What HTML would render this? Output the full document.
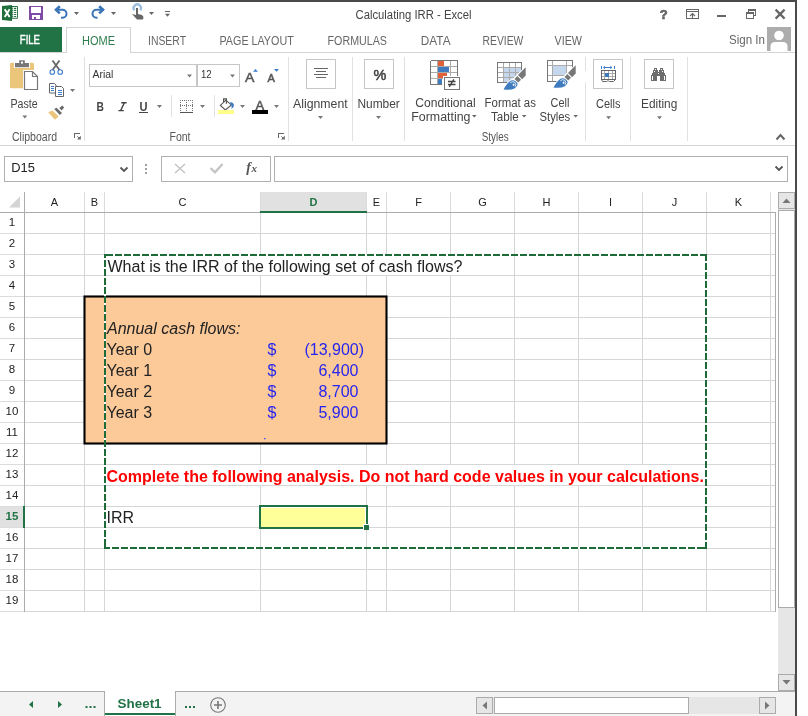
<!DOCTYPE html><html><head><meta charset="utf-8"><title>Calculating IRR - Excel</title><style>
html,body{margin:0;padding:0;background:#fff;overflow:hidden;width:808px;height:716px;}
svg{position:absolute;left:0;top:0;font-family:"Liberation Sans", sans-serif;will-change:transform;}
.c{shape-rendering:crispEdges}
</style></head><body>
<svg width="808" height="716" viewBox="0 0 808 716">
<g class="c">
<rect x="0" y="0" width="808" height="716" fill="#ffffff" />
</g>
<g>
<polygon points="2,6.1 12,5 12,21 2,19.9" fill="#1f6e3c"/>
<rect x="11.2" y="6" width="6.8" height="12.7" rx="1.2" fill="#1f6e3c"/>
<rect x="12.4" y="7" width="4.7" height="10.8" fill="#fff"/>
<rect x="14" y="7.80" width="2.3" height="1.1" rx="0.5" fill="#1f6e3c"/>
<rect x="12.2" y="7.80" width="1" height="1.1" fill="#1f6e3c"/>
<rect x="14" y="9.85" width="2.3" height="1.1" rx="0.5" fill="#1f6e3c"/>
<rect x="12.2" y="9.85" width="1" height="1.1" fill="#1f6e3c"/>
<rect x="14" y="11.90" width="2.3" height="1.1" rx="0.5" fill="#1f6e3c"/>
<rect x="12.2" y="11.90" width="1" height="1.1" fill="#1f6e3c"/>
<rect x="14" y="13.95" width="2.3" height="1.1" rx="0.5" fill="#1f6e3c"/>
<rect x="12.2" y="13.95" width="1" height="1.1" fill="#1f6e3c"/>
<rect x="14" y="16.00" width="2.3" height="1.1" rx="0.5" fill="#1f6e3c"/>
<rect x="12.2" y="16.00" width="1" height="1.1" fill="#1f6e3c"/>
<path d="M4.7 9.3 L9.6 17 M9.6 9.3 L4.7 17" stroke="#fff" stroke-width="1.9"/>
</g>
<g class="c">
<rect x="29" y="6" width="14" height="14" fill="#7e4ba8" />
<rect x="31" y="7" width="10" height="6" fill="#fff" />
<rect x="32" y="15" width="8" height="4" fill="#fff" />
<rect x="34" y="17" width="2" height="2" fill="#7e4ba8" />
</g>
<g fill="none" stroke="#3a75b8" stroke-width="2">
<path d="M56 9.8 H62.5 A4 4 0 0 1 62.5 17.8 H61"/>
<path d="M59.8 6.2 L56 9.8 L59.8 13.4" stroke-width="2.6"/>
<path d="M104 9.8 H96.5 A4 4 0 0 0 96.5 17.8 H97.5"/>
<path d="M99.2 6.2 L103 9.8 L99.2 13.4" stroke-width="2.6"/>
</g>
<polygon points="74.0,12 79.0,12 76.5,15" fill="#666"/>
<polygon points="111.0,12 116.0,12 113.5,15" fill="#666"/>
<path d="M134.3 10.3 A3.7 3.7 0 1 1 140.3 10.3" fill="none" stroke="#9bbde0" stroke-width="2.2"/>
<rect x="136" y="8" width="2" height="7" fill="#666"/>
<polygon points="132,14 136,15 136,12.5 138,12.5 138,14 142,15 143.5,17 143,19.6 137,19.6" fill="#666"/>
<polygon points="149.0,12 154.0,12 151.5,15" fill="#666"/>
<g class="c"><rect x="165" y="11" width="5" height="1" fill="#666" /></g>
<polygon points="165.0,13.8 170.0,13.8 167.5,16.8" fill="#666"/>
<text x="355.5" y="18.5" font-size="12.5" fill="#444" font-weight="normal" font-style="normal" textLength="116.0" lengthAdjust="spacingAndGlyphs">Calculating IRR - Excel</text>
<text x="659.8" y="18.6" font-size="13" font-weight="bold" fill="#666" stroke="#666" stroke-width="0.7">?</text>
<g class="c">
<rect x="686.5" y="9.5" width="12" height="9" fill="none" stroke="#666" stroke-width="1"/>
<rect x="686" y="11" width="13" height="1" fill="#666" />
<rect x="716.8" y="14.6" width="9" height="2" fill="#666" />
<rect x="748.5" y="9.5" width="7" height="6" fill="none" stroke="#666" stroke-width="1"/>
<rect x="746" y="12" width="8" height="7" fill="#fff" />
<rect x="746.5" y="12.5" width="7" height="6" fill="none" stroke="#666" stroke-width="1"/>
<rect x="746" y="12" width="8" height="2" fill="#666" />
<rect x="748" y="9" width="8" height="2" fill="#666" />
</g>
<path d="M690 16 L692.5 13.5 L695 16 M692.5 13.5 V18.5" fill="none" stroke="#666" stroke-width="1.1"/>
<path d="M775.6 9.6 L784.6 18.6 M784.6 9.6 L775.6 18.6" stroke="#666" stroke-width="2.2"/>
<rect x="778.6" y="12.6" width="3" height="3" fill="#666"/>
<g class="c">
<rect x="0" y="27" width="62" height="25" fill="#217346" />
<rect x="0" y="52" width="66" height="1" fill="#d4d4d4" />
<rect x="131" y="52" width="664" height="1" fill="#d4d4d4" />
<rect x="66" y="27" width="1" height="26" fill="#d4d4d4" />
<rect x="130" y="27" width="1" height="26" fill="#d4d4d4" />
<rect x="66" y="27" width="65" height="1" fill="#d4d4d4" />
</g>
<text x="19.8" y="44.2" font-size="12.5" fill="#fff" font-weight="normal" font-style="normal" textLength="20.2" lengthAdjust="spacingAndGlyphs" stroke="#fff" stroke-width="0.45">FILE</text>
<text x="82" y="45.1" font-size="12.5" fill="#2e7d4e" font-weight="normal" font-style="normal" textLength="33.0" lengthAdjust="spacingAndGlyphs">HOME</text>
<text x="148" y="45.1" font-size="12.5" fill="#666" font-weight="normal" font-style="normal" textLength="38.0" lengthAdjust="spacingAndGlyphs">INSERT</text>
<text x="219.5" y="45.1" font-size="12.5" fill="#666" font-weight="normal" font-style="normal" textLength="74.2" lengthAdjust="spacingAndGlyphs">PAGE LAYOUT</text>
<text x="327.6" y="45.1" font-size="12.5" fill="#666" font-weight="normal" font-style="normal" textLength="59.4" lengthAdjust="spacingAndGlyphs">FORMULAS</text>
<text x="420.8" y="45.1" font-size="12.5" fill="#666" font-weight="normal" font-style="normal" textLength="29.7" lengthAdjust="spacingAndGlyphs">DATA</text>
<text x="482.6" y="45.1" font-size="12.5" fill="#666" font-weight="normal" font-style="normal" textLength="40.7" lengthAdjust="spacingAndGlyphs">REVIEW</text>
<text x="554.5" y="45.1" font-size="12.5" fill="#666" font-weight="normal" font-style="normal" textLength="27.5" lengthAdjust="spacingAndGlyphs">VIEW</text>
<text x="729" y="43.6" font-size="12.5" fill="#666" font-weight="normal" font-style="normal" textLength="36.0" lengthAdjust="spacingAndGlyphs">Sign In</text>
<g>
<rect x="767" y="27" width="24" height="24" fill="#adadad" />
<circle cx="779" cy="35.5" r="4.8" fill="#fff"/>
<path d="M770.5 51 V46.5 Q770.5 42 775 42 H783 Q787.5 42 787.5 46.5 V51 Z" fill="#fff"/>
<circle cx="779" cy="35.5" r="5.8" fill="none" stroke="#adadad" stroke-width="1"/>
</g>
<g class="c">
<rect x="0" y="145" width="795" height="1" fill="#d4d4d4" />
<rect x="84" y="57" width="1" height="84" fill="#e1e1e1" />
<rect x="288" y="57" width="1" height="84" fill="#e1e1e1" />
<rect x="352" y="57" width="1" height="84" fill="#e1e1e1" />
<rect x="404" y="57" width="1" height="84" fill="#e1e1e1" />
<rect x="585" y="57" width="1" height="84" fill="#e1e1e1" />
<rect x="630" y="57" width="1" height="84" fill="#e1e1e1" />
<rect x="687" y="57" width="1" height="84" fill="#e1e1e1" />
</g>
<text x="12" y="141" font-size="12" fill="#555" font-weight="normal" font-style="normal" textLength="45.0" lengthAdjust="spacingAndGlyphs">Clipboard</text>
<text x="169.5" y="141" font-size="12" fill="#555" font-weight="normal" font-style="normal" textLength="21.0" lengthAdjust="spacingAndGlyphs">Font</text>
<text x="481.8" y="141" font-size="12" fill="#555" font-weight="normal" font-style="normal" textLength="26.8" lengthAdjust="spacingAndGlyphs">Styles</text>
<g class="c"><rect x="74" y="133" width="6" height="1" fill="#666" /><rect x="74" y="133" width="1" height="5" fill="#666" /></g><polygon points="77,139.6 80.8,139.6 80.8,135.8" fill="#666"/><path d="M77.3 136.3 L79.5 138.5" stroke="#666" stroke-width="1"/>
<g class="c"><rect x="278" y="133" width="6" height="1" fill="#666" /><rect x="278" y="133" width="1" height="5" fill="#666" /></g><polygon points="281,139.6 284.8,139.6 284.8,135.8" fill="#666"/><path d="M281.3 136.3 L283.5 138.5" stroke="#666" stroke-width="1"/>
<path d="M776.5 139.5 L780.5 135 L784.5 139.5" fill="none" stroke="#666" stroke-width="2"/>
<g>
<rect x="10" y="62.8" width="24" height="25.5" rx="1.5" fill="#ebc57a"/>
<rect x="14" y="62" width="16" height="6" fill="#fff" />
<path d="M15 67.2 V63 H19.2 V60.3 H24.8 V63 H29 V67.2 Z" fill="#777"/>
<rect x="21" y="61.6" width="2" height="2" fill="#fff" />
<rect x="23" y="70" width="16" height="21" fill="#fff" />
<path d="M24.5 71.5 H32.5 L37.5 76.5 V89.5 H24.5 Z M32.5 71.5 V76.5 H37.5" fill="none" stroke="#777" stroke-width="1.2"/>
</g>
<text x="10.5" y="108" font-size="12" fill="#444" font-weight="normal" font-style="normal" textLength="27.2" lengthAdjust="spacingAndGlyphs">Paste</text>
<polygon points="22.3,115.5 27.3,115.5 24.8,118.5" fill="#777"/>
<path d="M52.5 60.5 L59.5 70 M59.5 60.5 L52.5 70" stroke="#666" stroke-width="1.8"/>
<circle cx="52.3" cy="72" r="2.3" fill="none" stroke="#3d7cc9" stroke-width="1.1"/>
<circle cx="60.2" cy="72" r="2.3" fill="none" stroke="#3d7cc9" stroke-width="1.1"/>
<g fill="#fff" stroke="#666" stroke-width="1">
<path d="M49.5 83.5 H54.5 L56 85 V93 H49.5 Z"/>
<path d="M55.5 86.5 H61.5 L63.5 88.5 V96.5 H55.5 Z"/>
</g>
<g class="c" fill="#3d7cc9"><rect x="51" y="86" width="3" height="0.9" fill="#3d7cc9" /><rect x="51" y="88" width="3" height="0.9" fill="#3d7cc9" /><rect x="51" y="90" width="3" height="0.9" fill="#3d7cc9" /><rect x="57.5" y="90" width="4.5" height="0.9" fill="#3d7cc9" /><rect x="57.5" y="92" width="4.5" height="0.9" fill="#3d7cc9" /><rect x="57.5" y="94" width="4.5" height="0.9" fill="#3d7cc9" /></g>
<polygon points="70.0,89 75.0,89 72.5,92" fill="#777"/>
<polygon points="48.2,112.3 52.4,110.4 58.7,116.4 54.9,119.8" fill="#ebc57a"/>
<polygon points="54.2,109.1 56.5,107.7 62,112.9 59.8,114.9" fill="#6a6a6a"/>
<polygon points="59.3,108.1 62.3,105.6 64.2,107.6 61.5,110.5" fill="#6a6a6a"/>
<g class="c">
<rect x="89.5" y="64.5" width="107" height="22" fill="#fff" stroke="#c6c6c6"/>
<rect x="197.5" y="64.5" width="42" height="22" fill="#fff" stroke="#c6c6c6"/>
</g>
<text x="92.5" y="78" font-size="11.5" fill="#333" font-weight="normal" font-style="normal" textLength="20.9" lengthAdjust="spacingAndGlyphs">Arial</text>
<polygon points="187.0,74.5 192.0,74.5 189.5,77.5" fill="#777"/>
<text x="201" y="78" font-size="11.5" fill="#333" font-weight="normal" font-style="normal" textLength="10.7" lengthAdjust="spacingAndGlyphs">12</text>
<polygon points="230.0,74.5 235.0,74.5 232.5,77.5" fill="#777"/>
<text x="245" y="81.6" font-size="13" fill="#555" font-weight="normal" font-style="normal" textLength="9.4" lengthAdjust="spacingAndGlyphs" stroke="#555" stroke-width="0.5">A</text>
<polygon points="253,71.7 255.5,69 258,71.7" fill="#3d7cc9"/>
<text x="267.4" y="81.6" font-size="10.5" fill="#555" font-weight="normal" font-style="normal" textLength="7.4" lengthAdjust="spacingAndGlyphs" stroke="#555" stroke-width="0.5">A</text>
<polygon points="274,69 279,69 276.5,71.7" fill="#3d7cc9"/>
<text x="96.6" y="111" font-size="12.5" fill="#444" font-weight="bold" font-style="normal" textLength="7.4" lengthAdjust="spacingAndGlyphs">B</text>
<path d="M121.2 102.8 H126.6 M118.4 110.6 H123.8 M124.4 102.8 L120.6 110.6" stroke="#444" stroke-width="1.4" fill="none"/>
<text x="139.6" y="110.5" font-size="12" fill="#444" font-weight="bold" font-style="normal" textLength="8.0" lengthAdjust="spacingAndGlyphs">U</text>
<g class="c"><rect x="139" y="112" width="9" height="1.3" fill="#444" /></g>
<polygon points="157.0,105 162.0,105 159.5,108" fill="#777"/>
<g class="c"><rect x="171" y="95" width="1" height="22" fill="#e1e1e1" /><rect x="214" y="95" width="1" height="22" fill="#e1e1e1" /></g>
<g class="c">
<path d="M180.5 100 V111 M192.5 100 V111 M186.5 100 V111 M180 100.5 H193 M180 105.5 H193" fill="none" stroke="#777" stroke-width="1" stroke-dasharray="1,1"/>
<rect x="180" y="112" width="13" height="1.3" fill="#555" />
</g>
<polygon points="200.0,105 205.0,105 202.5,108" fill="#777"/>
<path d="M220.4 105.4 L225.8 100.2 L231.4 104.9 L225.4 110 Z" fill="none" stroke="#555" stroke-width="1.1"/>
<path d="M223.6 102 V98.8 H226.4 V103.8" fill="none" stroke="#555" stroke-width="1.2"/>
<path d="M230.3 102 Q234.6 102.8 233.8 106.3 Q233.2 108 231.3 108.8 Q232.3 105.5 230.3 104.3 Z" fill="#3f7cbf"/>
<g class="c"><rect x="218" y="110" width="16" height="3.5" fill="#ffff8c" /></g>
<polygon points="240.0,105 245.0,105 242.5,108" fill="#777"/>
<text x="255.6" y="109.5" font-size="12.5" fill="#555" font-weight="normal" font-style="normal" textLength="8.7" lengthAdjust="spacingAndGlyphs" stroke="#555" stroke-width="0.5">A</text>
<g class="c"><rect x="252" y="110" width="16" height="3.5" fill="#000" /></g>
<polygon points="274.0,105 279.0,105 276.5,108" fill="#777"/>
<g class="c">
<rect x="306.5" y="59.5" width="29" height="29" fill="#fff" stroke="#c6c6c6"/>
<rect x="314" y="68" width="14" height="1" fill="#666" />
<rect x="316" y="71" width="10" height="1" fill="#666" />
<rect x="314" y="74" width="14" height="1" fill="#666" />
<rect x="316" y="77" width="10" height="1" fill="#666" />
<rect x="364.5" y="59.5" width="29" height="29" fill="#fff" stroke="#c6c6c6"/>
</g>
<text x="373.5" y="79.8" font-size="14" fill="#444" font-weight="normal" font-style="normal" textLength="12.8" lengthAdjust="spacingAndGlyphs" stroke="#444" stroke-width="0.5">%</text>
<text x="293" y="107.8" font-size="12" fill="#444" font-weight="normal" font-style="normal" textLength="54.7" lengthAdjust="spacingAndGlyphs">Alignment</text>
<polygon points="318.0,116 323.0,116 320.5,119" fill="#777"/>
<text x="357.4" y="107.8" font-size="12" fill="#444" font-weight="normal" font-style="normal" textLength="42.4" lengthAdjust="spacingAndGlyphs">Number</text>
<polygon points="376.0,116 381.0,116 378.5,119" fill="#777"/>
<g class="c">
<rect x="438" y="60.5" width="6" height="6" fill="#e0623a" />
<rect x="438" y="66.5" width="11" height="6" fill="#3f7cbf" />
<rect x="438" y="72.5" width="9" height="6" fill="#e0623a" />
<rect x="438" y="78.5" width="4" height="6" fill="#3f7cbf" />
</g>
<g class="c" fill="none" stroke-width="1">
<path d="M437.5 60.5 V84.5 M450.5 60.5 V79 M430.5 66.5 H457.5 M430.5 72.5 H457.5 M430.5 78.5 H445" stroke="#aaa"/>
<path d="M430.5 60.5 H457.5 V79 M430.5 60.5 V84.5 H442" stroke="#777"/>
</g>
<g class="c"><rect x="443" y="76" width="18" height="14" fill="#fff" /><rect x="444.5" y="77.5" width="15" height="11.5" fill="#fff" stroke="#777" stroke-width="1"/></g>
<path d="M448 81.5 H455.5 M448 84.5 H455.5 M453.8 79.3 L449.2 86.8" stroke="#444" stroke-width="1.3"/>
<text x="415.3" y="106.8" font-size="12" fill="#444" font-weight="normal" font-style="normal" textLength="60.4" lengthAdjust="spacingAndGlyphs">Conditional</text>
<text x="411.3" y="121.1" font-size="12" fill="#444" font-weight="normal" font-style="normal" textLength="59.2" lengthAdjust="spacingAndGlyphs">Formatting</text>
<polygon points="472.0,115 476.6,115 474.3,117.4" fill="#666"/>
<g class="c">
<rect x="503.5" y="67.5" width="18" height="15" fill="#c5d7ec" />
</g>
<g class="c" fill="none" stroke-width="1">
<path d="M503.5 62.5 V82.5 M509.5 62.5 V82.5 M515.5 62.5 V82.5 M497.5 67.5 H521.5 M497.5 72.5 H521.5 M497.5 77.5 H521.5" stroke="#aaa"/>
<path d="M497.5 62.5 H521.5 V82.5 H497.5 Z" stroke="#777"/>
</g>
<g transform="translate(525.7,71.45) rotate(45)"><path d="M-4 -6 L16 -6 L16 32 L-3 29.8 Q-5.6 23 -5.3 18.5 Q-5 14.8 -4 13.5 Z" fill="#fff"/><polygon points="-2.9,-2.9 2.9,2.9 2.9,8 -2.9,8" fill="#777"/><rect x="-2.6" y="9.2" width="5.2" height="4" fill="#777"/><path d="M3.2 14.5 Q4.8 16.5 4.2 19.5 Q3 24 -2.9 28.5 Q-4.8 22 -4.3 18.5 Q-3.8 14.6 -0.2 14.2 Q1.8 14.1 3.2 14.5 Z" fill="#3f7cbf"/><path d="M-2.9 18.8 Q-2.6 15.6 0.2 15.4 Q3 15.5 3.3 18.3" fill="none" stroke="#fff" stroke-width="0.8"/><circle cx="0.8" cy="17.9" r="1" fill="#fff"/></g>
<text x="484.6" y="106.8" font-size="12" fill="#444" font-weight="normal" font-style="normal" textLength="51.3" lengthAdjust="spacingAndGlyphs">Format as</text>
<text x="491" y="121.1" font-size="12" fill="#444" font-weight="normal" font-style="normal" textLength="27.8" lengthAdjust="spacingAndGlyphs">Table</text>
<polygon points="521.9000000000001,115 526.5,115 524.2,117.4" fill="#666"/>
<g class="c">
<rect x="552.5" y="65.5" width="14" height="10" fill="#c5d7ec" />
</g>
<g class="c" fill="none" stroke-width="1">
<path d="M552.5 60.5 V81.5 M566.5 60.5 V81.5 M547.5 65.5 H572.5 M547.5 75.5 H572.5" stroke="#aaa"/>
<path d="M547.5 60.5 H572.5 V81.5 H547.5 Z" stroke="#777"/>
</g>
<g transform="translate(575.7,69.45) rotate(45)"><path d="M-4 -6 L16 -6 L16 32 L-3 29.8 Q-5.6 23 -5.3 18.5 Q-5 14.8 -4 13.5 Z" fill="#fff"/><polygon points="-2.9,-2.9 2.9,2.9 2.9,8 -2.9,8" fill="#777"/><rect x="-2.6" y="9.2" width="5.2" height="4" fill="#777"/><path d="M3.2 14.5 Q4.8 16.5 4.2 19.5 Q3 24 -2.9 28.5 Q-4.8 22 -4.3 18.5 Q-3.8 14.6 -0.2 14.2 Q1.8 14.1 3.2 14.5 Z" fill="#3f7cbf"/><path d="M-2.9 18.8 Q-2.6 15.6 0.2 15.4 Q3 15.5 3.3 18.3" fill="none" stroke="#fff" stroke-width="0.8"/><circle cx="0.8" cy="17.9" r="1" fill="#fff"/></g>
<text x="550.5" y="106.8" font-size="12" fill="#444" font-weight="normal" font-style="normal" textLength="18.8" lengthAdjust="spacingAndGlyphs">Cell</text>
<text x="539.5" y="121.1" font-size="12" fill="#444" font-weight="normal" font-style="normal" textLength="30.7" lengthAdjust="spacingAndGlyphs">Styles</text>
<polygon points="573.4000000000001,115 578.0,115 575.7,117.4" fill="#666"/>
<g class="c">
<rect x="593.5" y="59.5" width="29" height="29" fill="#fff" stroke="#c6c6c6"/>
<rect x="644.5" y="59.5" width="29" height="29" fill="#fff" stroke="#c6c6c6"/>
</g>
<g class="c" fill="none" stroke-width="1">
<path d="M604.5 70.5 V79.5 M608.5 70.5 V79.5 M612.5 70.5 V79.5 M601.5 73.5 H615.5 M601.5 76.5 H615.5" stroke="#aaa"/>
<rect x="604.5" y="73" width="4.5" height="4" fill="#3f7cbf" />
<path d="M601.5 70.5 H615.5 V79.5 H601.5 Z" stroke="#666"/>
</g>
<path d="M602 79.5 V80.5 Q602 81.5 603 81.5 H606.5 Q607.5 81.5 608 80.5 Q608.5 81.5 609.5 81.5 H613.5 L615 80" fill="none" stroke="#666" stroke-width="1"/>
<g class="c"><rect x="601" y="66" width="1" height="3" fill="#3d7cc9" /><rect x="613.5" y="66" width="1" height="3" fill="#3d7cc9" /><rect x="604" y="67" width="7" height="1" fill="#3d7cc9" /></g>
<polygon points="603,67.5 605,65.8 605,69.2" fill="#3d7cc9"/><polygon points="612.3,67.5 610.3,65.8 610.3,69.2" fill="#3d7cc9"/>
<g class="c">
<rect x="654" y="68" width="3" height="3" fill="#6d6d6d" />
<rect x="660" y="68" width="3" height="3" fill="#6d6d6d" />
<rect x="653" y="70" width="5" height="3" fill="#6d6d6d" />
<rect x="659" y="70" width="5" height="3" fill="#6d6d6d" />
<rect x="652" y="73" width="5" height="2" fill="#6d6d6d" />
<rect x="660" y="73" width="5" height="2" fill="#6d6d6d" />
<rect x="651" y="75" width="6" height="6" fill="#6d6d6d" />
<rect x="660" y="75" width="6" height="6" fill="#6d6d6d" />
<rect x="657" y="72" width="3" height="4" fill="#6d6d6d" />
<rect x="655" y="69" width="1" height="1" fill="#fff" />
<rect x="661" y="69" width="1" height="1" fill="#fff" />
<rect x="654" y="71" width="1" height="1" fill="#fff" />
<rect x="662" y="71" width="1" height="1" fill="#fff" />
<rect x="652" y="76" width="1" height="4" fill="#fff" />
<rect x="664" y="76" width="1" height="4" fill="#fff" />
<rect x="658" y="73" width="1" height="1" fill="#fff" />
</g>
<text x="596" y="107.8" font-size="12" fill="#444" font-weight="normal" font-style="normal" textLength="24.4" lengthAdjust="spacingAndGlyphs">Cells</text>
<polygon points="606.1,116.3 611.1,116.3 608.6,119.3" fill="#777"/>
<text x="641" y="107.8" font-size="12" fill="#444" font-weight="normal" font-style="normal" textLength="36.3" lengthAdjust="spacingAndGlyphs">Editing</text>
<polygon points="657.0,116.3 662.0,116.3 659.5,119.3" fill="#777"/>
<g class="c">
<rect x="4.5" y="156.5" width="128" height="25" fill="#fff" stroke="#b0b0b0"/>
<rect x="161.5" y="156.5" width="109" height="25" fill="#fff" stroke="#b0b0b0"/>
<rect x="274.5" y="156.5" width="513" height="25" fill="#fff" stroke="#b0b0b0"/>
<rect x="145" y="164" width="2" height="2" fill="#a0a0a0" />
<rect x="145" y="168" width="2" height="2" fill="#a0a0a0" />
<rect x="145" y="172" width="2" height="2" fill="#a0a0a0" />
</g>
<text x="11.3" y="172.3" font-size="12.5" fill="#222" font-weight="normal" font-style="normal" textLength="23.7" lengthAdjust="spacingAndGlyphs">D15</text>
<path d="M120.5 167.5 L124 171 L127.5 167.5" fill="none" stroke="#555" stroke-width="1.8"/>
<path d="M775.5 166.5 L779 170 L782.5 166.5" fill="none" stroke="#555" stroke-width="1.8"/>
<path d="M175 164 L185 173 M185 164 L175 173" stroke="#c4c4c4" stroke-width="1.4"/>
<path d="M210.5 168 L215 172.3 L222.5 164" fill="none" stroke="#c4c4c4" stroke-width="2.3"/>
<text x="246.3" y="171.8" font-family="Liberation Serif" font-size="14" font-style="italic" font-weight="bold" fill="#555">f</text>
<text x="251.6" y="171.8" font-family="Liberation Serif" font-size="11" font-style="italic" font-weight="bold" fill="#555">x</text>
<g class="c">
<rect x="260" y="192" width="106" height="20" fill="#e1e1e1" />
<rect x="0" y="506" width="23" height="21" fill="#e1e1e1" />
<rect x="84" y="192" width="1" height="20" fill="#dcdcdc" />
<rect x="104" y="192" width="1" height="20" fill="#dcdcdc" />
<rect x="260" y="192" width="1" height="20" fill="#dcdcdc" />
<rect x="366" y="192" width="1" height="20" fill="#dcdcdc" />
<rect x="386" y="192" width="1" height="20" fill="#dcdcdc" />
<rect x="450" y="192" width="1" height="20" fill="#dcdcdc" />
<rect x="514" y="192" width="1" height="20" fill="#dcdcdc" />
<rect x="578" y="192" width="1" height="20" fill="#dcdcdc" />
<rect x="642" y="192" width="1" height="20" fill="#dcdcdc" />
<rect x="706" y="192" width="1" height="20" fill="#dcdcdc" />
<rect x="770" y="192" width="1" height="20" fill="#dcdcdc" />
<rect x="0" y="212" width="776" height="1" fill="#ababab" />
<rect x="24" y="192" width="1" height="420" fill="#ababab" />
</g>
<polygon points="20,196.5 20,207.5 9,207.5" fill="#d4d4d4"/>
<g class="c">
<rect x="0" y="233" width="24" height="1" fill="#dcdcdc" />
<rect x="25" y="233" width="750" height="1" fill="#d6d6d6" />
<rect x="0" y="254" width="24" height="1" fill="#dcdcdc" />
<rect x="25" y="254" width="750" height="1" fill="#d6d6d6" />
<rect x="0" y="275" width="24" height="1" fill="#dcdcdc" />
<rect x="25" y="275" width="750" height="1" fill="#d6d6d6" />
<rect x="0" y="296" width="24" height="1" fill="#dcdcdc" />
<rect x="25" y="296" width="750" height="1" fill="#d6d6d6" />
<rect x="0" y="317" width="24" height="1" fill="#dcdcdc" />
<rect x="25" y="317" width="750" height="1" fill="#d6d6d6" />
<rect x="0" y="338" width="24" height="1" fill="#dcdcdc" />
<rect x="25" y="338" width="750" height="1" fill="#d6d6d6" />
<rect x="0" y="359" width="24" height="1" fill="#dcdcdc" />
<rect x="25" y="359" width="750" height="1" fill="#d6d6d6" />
<rect x="0" y="380" width="24" height="1" fill="#dcdcdc" />
<rect x="25" y="380" width="750" height="1" fill="#d6d6d6" />
<rect x="0" y="401" width="24" height="1" fill="#dcdcdc" />
<rect x="25" y="401" width="750" height="1" fill="#d6d6d6" />
<rect x="0" y="422" width="24" height="1" fill="#dcdcdc" />
<rect x="25" y="422" width="750" height="1" fill="#d6d6d6" />
<rect x="0" y="443" width="24" height="1" fill="#dcdcdc" />
<rect x="25" y="443" width="750" height="1" fill="#d6d6d6" />
<rect x="0" y="464" width="24" height="1" fill="#dcdcdc" />
<rect x="25" y="464" width="750" height="1" fill="#d6d6d6" />
<rect x="0" y="485" width="24" height="1" fill="#dcdcdc" />
<rect x="25" y="485" width="750" height="1" fill="#d6d6d6" />
<rect x="0" y="506" width="24" height="1" fill="#dcdcdc" />
<rect x="25" y="506" width="750" height="1" fill="#d6d6d6" />
<rect x="0" y="527" width="24" height="1" fill="#dcdcdc" />
<rect x="25" y="527" width="750" height="1" fill="#d6d6d6" />
<rect x="0" y="548" width="24" height="1" fill="#dcdcdc" />
<rect x="25" y="548" width="750" height="1" fill="#d6d6d6" />
<rect x="0" y="569" width="24" height="1" fill="#dcdcdc" />
<rect x="25" y="569" width="750" height="1" fill="#d6d6d6" />
<rect x="0" y="590" width="24" height="1" fill="#dcdcdc" />
<rect x="25" y="590" width="750" height="1" fill="#d6d6d6" />
<rect x="0" y="611" width="24" height="1" fill="#dcdcdc" />
<rect x="25" y="611" width="750" height="1" fill="#d6d6d6" />
<rect x="84" y="213" width="1" height="399" fill="#d6d6d6" />
<rect x="104" y="213" width="1" height="399" fill="#d6d6d6" />
<rect x="260" y="213" width="1" height="42" fill="#d6d6d6" />
<rect x="260" y="275" width="1" height="190" fill="#d6d6d6" />
<rect x="260" y="485" width="1" height="127" fill="#d6d6d6" />
<rect x="366" y="213" width="1" height="42" fill="#d6d6d6" />
<rect x="366" y="275" width="1" height="190" fill="#d6d6d6" />
<rect x="366" y="485" width="1" height="127" fill="#d6d6d6" />
<rect x="386" y="213" width="1" height="42" fill="#d6d6d6" />
<rect x="386" y="275" width="1" height="190" fill="#d6d6d6" />
<rect x="386" y="485" width="1" height="127" fill="#d6d6d6" />
<rect x="450" y="213" width="1" height="42" fill="#d6d6d6" />
<rect x="450" y="275" width="1" height="190" fill="#d6d6d6" />
<rect x="450" y="485" width="1" height="127" fill="#d6d6d6" />
<rect x="514" y="213" width="1" height="252" fill="#d6d6d6" />
<rect x="514" y="485" width="1" height="127" fill="#d6d6d6" />
<rect x="578" y="213" width="1" height="252" fill="#d6d6d6" />
<rect x="578" y="485" width="1" height="127" fill="#d6d6d6" />
<rect x="642" y="213" width="1" height="252" fill="#d6d6d6" />
<rect x="642" y="485" width="1" height="127" fill="#d6d6d6" />
<rect x="706" y="213" width="1" height="399" fill="#d6d6d6" />
<rect x="770" y="213" width="1" height="399" fill="#d6d6d6" />
<rect x="775" y="212" width="1" height="400" fill="#ababab" />
<rect x="260" y="211" width="107" height="2" fill="#217346" />
<rect x="23" y="506" width="2" height="22" fill="#217346" />
</g>
<text x="54.5" y="205.6" font-size="11" text-anchor="middle" fill="#222" font-weight="normal">A</text>
<text x="94.5" y="205.6" font-size="11" text-anchor="middle" fill="#222" font-weight="normal">B</text>
<text x="182.5" y="205.6" font-size="11" text-anchor="middle" fill="#222" font-weight="normal">C</text>
<text x="313.5" y="205.6" font-size="11" text-anchor="middle" fill="#217346" font-weight="bold">D</text>
<text x="376.5" y="205.6" font-size="11" text-anchor="middle" fill="#222" font-weight="normal">E</text>
<text x="418.5" y="205.6" font-size="11" text-anchor="middle" fill="#222" font-weight="normal">F</text>
<text x="482.5" y="205.6" font-size="11" text-anchor="middle" fill="#222" font-weight="normal">G</text>
<text x="546.5" y="205.6" font-size="11" text-anchor="middle" fill="#222" font-weight="normal">H</text>
<text x="610.5" y="205.6" font-size="11" text-anchor="middle" fill="#222" font-weight="normal">I</text>
<text x="674.5" y="205.6" font-size="11" text-anchor="middle" fill="#222" font-weight="normal">J</text>
<text x="738.5" y="205.6" font-size="11" text-anchor="middle" fill="#222" font-weight="normal">K</text>
<text x="12" y="226.3" font-size="11.5" text-anchor="middle" fill="#222" font-weight="normal">1</text>
<text x="12" y="247.3" font-size="11.5" text-anchor="middle" fill="#222" font-weight="normal">2</text>
<text x="12" y="268.3" font-size="11.5" text-anchor="middle" fill="#222" font-weight="normal">3</text>
<text x="12" y="289.3" font-size="11.5" text-anchor="middle" fill="#222" font-weight="normal">4</text>
<text x="12" y="310.3" font-size="11.5" text-anchor="middle" fill="#222" font-weight="normal">5</text>
<text x="12" y="331.3" font-size="11.5" text-anchor="middle" fill="#222" font-weight="normal">6</text>
<text x="12" y="352.3" font-size="11.5" text-anchor="middle" fill="#222" font-weight="normal">7</text>
<text x="12" y="373.3" font-size="11.5" text-anchor="middle" fill="#222" font-weight="normal">8</text>
<text x="12" y="394.3" font-size="11.5" text-anchor="middle" fill="#222" font-weight="normal">9</text>
<text x="12" y="415.3" font-size="11.5" text-anchor="middle" fill="#222" font-weight="normal">10</text>
<text x="12" y="436.3" font-size="11.5" text-anchor="middle" fill="#222" font-weight="normal">11</text>
<text x="12" y="457.3" font-size="11.5" text-anchor="middle" fill="#222" font-weight="normal">12</text>
<text x="12" y="478.3" font-size="11.5" text-anchor="middle" fill="#222" font-weight="normal">13</text>
<text x="12" y="499.3" font-size="11.5" text-anchor="middle" fill="#222" font-weight="normal">14</text>
<text x="12" y="520.3" font-size="11.5" text-anchor="middle" fill="#217346" font-weight="bold">15</text>
<text x="12" y="541.3" font-size="11.5" text-anchor="middle" fill="#222" font-weight="normal">16</text>
<text x="12" y="562.3" font-size="11.5" text-anchor="middle" fill="#222" font-weight="normal">17</text>
<text x="12" y="583.3" font-size="11.5" text-anchor="middle" fill="#222" font-weight="normal">18</text>
<text x="12" y="604.3" font-size="11.5" text-anchor="middle" fill="#222" font-weight="normal">19</text>
<g class="c">
<rect x="84" y="296" width="302" height="147" fill="#fcc999" />
</g>
<rect x="84.5" y="296.5" width="302" height="147" fill="none" stroke="#000" stroke-width="2.1"/>
<g class="c">
<rect x="260" y="506" width="106" height="21" fill="#ffff99" />
<rect x="259" y="505" width="109" height="2" fill="#217346" />
<rect x="259" y="505" width="2" height="24" fill="#217346" />
<rect x="366" y="505" width="2" height="19" fill="#217346" />
<rect x="259" y="527" width="104" height="2" fill="#217346" />
<rect x="261" y="507" width="104" height="1" fill="#fff" />
<rect x="365" y="507" width="1" height="17" fill="#fff" />
<rect x="363" y="524" width="6" height="1" fill="#fff" />
<rect x="363" y="524" width="1" height="6" fill="#fff" />
<rect x="364" y="525" width="5" height="5" fill="#217346" />
</g>
<text x="107.5" y="271.5" font-size="16" fill="#222" font-weight="normal" font-style="normal" text-anchor="start">What is the IRR of the following set of cash flows?</text>
<text x="107" y="333.5" font-size="16" fill="#222" font-weight="normal" font-style="italic" text-anchor="start">Annual cash flows:</text>
<text x="106.5" y="354.5" font-size="16" fill="#222" font-weight="normal" font-style="normal" text-anchor="start">Year 0</text>
<text x="267.5" y="354.5" font-size="16" fill="#2525ee" font-weight="normal" font-style="normal" text-anchor="start">$</text>
<text x="364" y="354.5" font-size="16" fill="#2525ee" font-weight="normal" font-style="normal" text-anchor="end">(13,900)</text>
<text x="106.5" y="375.5" font-size="16" fill="#222" font-weight="normal" font-style="normal" text-anchor="start">Year 1</text>
<text x="267.5" y="375.5" font-size="16" fill="#2525ee" font-weight="normal" font-style="normal" text-anchor="start">$</text>
<text x="358.5" y="375.5" font-size="16" fill="#2525ee" font-weight="normal" font-style="normal" text-anchor="end">6,400</text>
<text x="106.5" y="396.5" font-size="16" fill="#222" font-weight="normal" font-style="normal" text-anchor="start">Year 2</text>
<text x="267.5" y="396.5" font-size="16" fill="#2525ee" font-weight="normal" font-style="normal" text-anchor="start">$</text>
<text x="358.5" y="396.5" font-size="16" fill="#2525ee" font-weight="normal" font-style="normal" text-anchor="end">8,700</text>
<text x="106.5" y="417.5" font-size="16" fill="#222" font-weight="normal" font-style="normal" text-anchor="start">Year 3</text>
<text x="267.5" y="417.5" font-size="16" fill="#2525ee" font-weight="normal" font-style="normal" text-anchor="start">$</text>
<text x="358.5" y="417.5" font-size="16" fill="#2525ee" font-weight="normal" font-style="normal" text-anchor="end">5,900</text>
<text x="106.5" y="482" font-size="16" fill="#ff0000" font-weight="bold" font-style="normal" text-anchor="start">Complete the following analysis. Do not hard code values in your calculations.</text>
<text x="106.5" y="523.3" font-size="16" fill="#222" font-weight="normal" font-style="normal" text-anchor="start">IRR</text>
<rect x="264" y="438" width="1.6" height="1.2" fill="#3355ee"/>
<g class="c">
<path d="M104 255 H706 M104 548 H706" stroke="#ffffff" stroke-width="2"/>
<path d="M105 254 V548 M706 254 V548" stroke="#ffffff" stroke-width="2"/>
<path d="M106 255 H706" stroke="#1e6b3a" stroke-width="2" stroke-dasharray="7,2" stroke-dashoffset="0"/>
<path d="M104 548 H706" stroke="#1e6b3a" stroke-width="2" stroke-dasharray="7,2" stroke-dashoffset="1"/>
<path d="M105 260 V548" stroke="#1e6b3a" stroke-width="2" stroke-dasharray="7,2"/>
<path d="M706 263 V548" stroke="#1e6b3a" stroke-width="2" stroke-dasharray="7,2"/>
<rect x="104" y="254" width="9" height="2" fill="#1e6b3a" />
<rect x="104" y="254" width="2" height="4" fill="#1e6b3a" />
<rect x="700" y="254" width="7" height="2" fill="#1e6b3a" />
<rect x="705" y="254" width="2" height="7" fill="#1e6b3a" />
<rect x="104" y="539" width="2" height="10" fill="#1e6b3a" />
<rect x="697" y="547" width="10" height="2" fill="#1e6b3a" />
<rect x="705" y="542" width="2" height="7" fill="#1e6b3a" />
</g>
<g class="c">
<rect x="778" y="192" width="17" height="499" fill="#e6e6e6" />
<rect x="778.5" y="192.5" width="16" height="16" fill="#e6e6e6" stroke="#ababab"/>
<rect x="778.5" y="210.5" width="16" height="397" fill="#fff" stroke="#ababab"/>
<rect x="778.5" y="674.5" width="16" height="16" fill="#e6e6e6" stroke="#ababab"/>
</g>
<polygon points="782.5,203 790.5,203 786.5,198.5" fill="#777"/>
<polygon points="782.5,680 790.5,680 786.5,684.5" fill="#777"/>
<g class="c">
<rect x="0" y="692" width="795" height="24" fill="#f3f3f3" />
<rect x="0" y="691" width="795" height="1" fill="#ababab" />
<rect x="104" y="691" width="72" height="25" fill="#fff" />
<rect x="104" y="691" width="1" height="25" fill="#ababab" />
<rect x="175" y="691" width="1" height="25" fill="#ababab" />
<rect x="105" y="713" width="70" height="2" fill="#217346" />
<rect x="476" y="697" width="300" height="17" fill="#e6e6e6" />
<rect x="476.5" y="697.5" width="16" height="16" fill="#e6e6e6" stroke="#ababab"/>
<rect x="494.5" y="697.5" width="194" height="16" fill="#fff" stroke="#ababab"/>
<rect x="759.5" y="697.5" width="16" height="16" fill="#e6e6e6" stroke="#ababab"/>
</g>
<polygon points="33,701 33,708 29,704.5" fill="#217346"/>
<polygon points="58,701 58,708 62,704.5" fill="#217346"/>
<polygon points="487,701.5 487,709.5 482.5,705.5" fill="#777"/>
<polygon points="765,701.5 765,709.5 769.5,705.5" fill="#777"/>
<rect x="85.5" y="706" width="2" height="2" fill="#217346"/>
<rect x="89.5" y="706" width="2" height="2" fill="#217346"/>
<rect x="93.5" y="706" width="2" height="2" fill="#217346"/>
<rect x="185" y="706" width="2" height="2" fill="#217346"/>
<rect x="189" y="706" width="2" height="2" fill="#217346"/>
<rect x="193" y="706" width="2" height="2" fill="#217346"/>
<text x="117.6" y="708" font-size="12.5" fill="#217346" font-weight="bold" font-style="normal" textLength="44.0" lengthAdjust="spacingAndGlyphs">Sheet1</text>
<circle cx="218" cy="705" r="7.3" fill="none" stroke="#777" stroke-width="1.1"/>
<path d="M214 705 H222 M218 701 V709" stroke="#777" stroke-width="1.6"/>
<g class="c">
<rect x="0" y="0" width="797" height="2" fill="#4a4a4a" />
<rect x="795" y="0" width="2" height="716" fill="#4a4a4a" />
<rect x="797" y="0" width="11" height="716" fill="#fefefe" />
</g>
</svg></body></html>
